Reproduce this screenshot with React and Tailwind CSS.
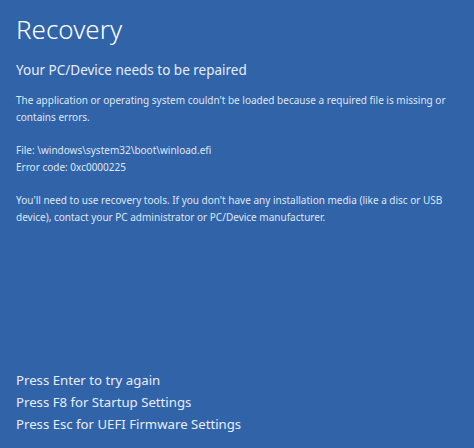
export default function App() {
  return (
    <div className="w-[474px] h-[448px] bg-[#3163a9] text-white flex flex-col px-[16px] overflow-hidden" style={{ fontFamily: '"Noto Sans", "Open Sans", sans-serif' }}>
      <h1 className="text-[26px] leading-[30px] mt-[14px] font-light">Recovery</h1>
      <h2 className="text-[13.5px] leading-[20px] mt-[16px] text-[#e8eef8]">Your PC/Device needs to be repaired</h2>
      <div className="text-[10px] leading-[17px] mt-[12px] text-[#dfe7f3] -mr-[4px]">
        <p>The application or operating system couldn't be loaded because a required file is missing or contains errors.</p>
        <p className="mt-[16px]">File: \windows\system32\boot\winload.efi</p>
        <p>Error code: 0xc0000225</p>
        <p className="mt-[16px]">You'll need to use recovery tools. If you don't have any installation media (like a disc or USB device), contact your PC administrator or PC/Device manufacturer.</p>
      </div>
      <div className="mt-auto mb-[13px] text-[13.2px] leading-[22px] text-[#e8eef8]">
        <p>Press Enter to try again</p>
        <p>Press F8 for Startup Settings</p>
        <p>Press Esc for UEFI Firmware Settings</p>
      </div>
    </div>
  );
}
